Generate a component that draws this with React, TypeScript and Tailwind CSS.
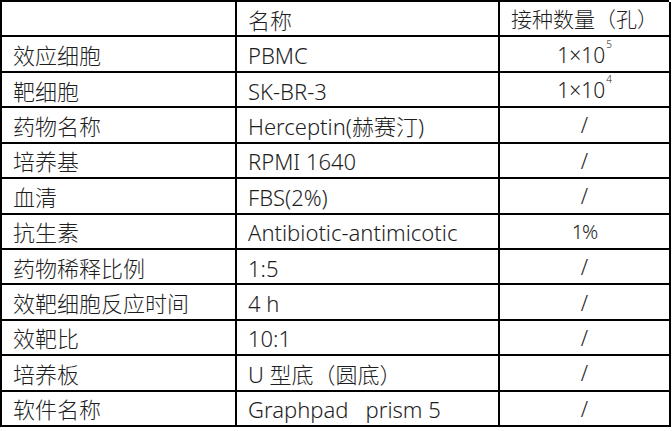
import React from "react";

const sup = "text-[10px] align-[10px] ml-[1px]";

const rows: [string, React.ReactNode, React.ReactNode][] = [
  ["", "名称", "接种数量（孔）"],
  ["效应细胞", "PBMC", <span>1×10<sup className={sup}>5</sup></span>],
  ["靶细胞", "SK-BR-3", <span>1×10<sup className={sup}>4</sup></span>],
  ["药物名称", "Herceptin(赫赛汀)", "/"],
  ["培养基", "RPMI 1640", "/"],
  ["血清", "FBS(2%)", "/"],
  ["抗生素", "Antibiotic-antimicotic", <span className="text-[20px] tracking-[-1px]">1%</span>],
  ["药物稀释比例", "1:5", "/"],
  ["效靶细胞反应时间", "4 h", "/"],
  ["效靶比", "10:1", "/"],
  ["培养板", "U 型底（圆底）", "/"],
  ["软件名称", <span className="whitespace-pre">Graphpad   prism 5</span>, "/"],
];

export default function App() {
  return (
    <div className="w-[672px] h-[431px] bg-white">
      <div
        className="w-[669px] h-[427px] grid grid-cols-[235px_263px_171px] grid-rows-[repeat(12,1fr)] border-l-2 border-t-2 border-black text-[#1e1e1e]"
        style={{ fontFamily: '"Noto Sans", "Noto Sans CJK SC", sans-serif' }}
      >
        {rows.map((r, i) => (
          <React.Fragment key={i}>
            <div className="border-r-2 border-b-2 border-black flex items-center pt-[2px] pl-[11px] text-[22px] font-light leading-none">
              {r[0]}
            </div>
            <div className="border-r-2 border-b-2 border-black flex items-center pt-[2px] pl-[11px] text-[22px] font-light leading-none">
              {r[1]}
            </div>
            <div className="border-r-2 border-b-2 border-black flex items-center justify-center pt-[2px] text-[21px] font-light leading-none">
              {r[2]}
            </div>
          </React.Fragment>
        ))}
      </div>
    </div>
  );
}
